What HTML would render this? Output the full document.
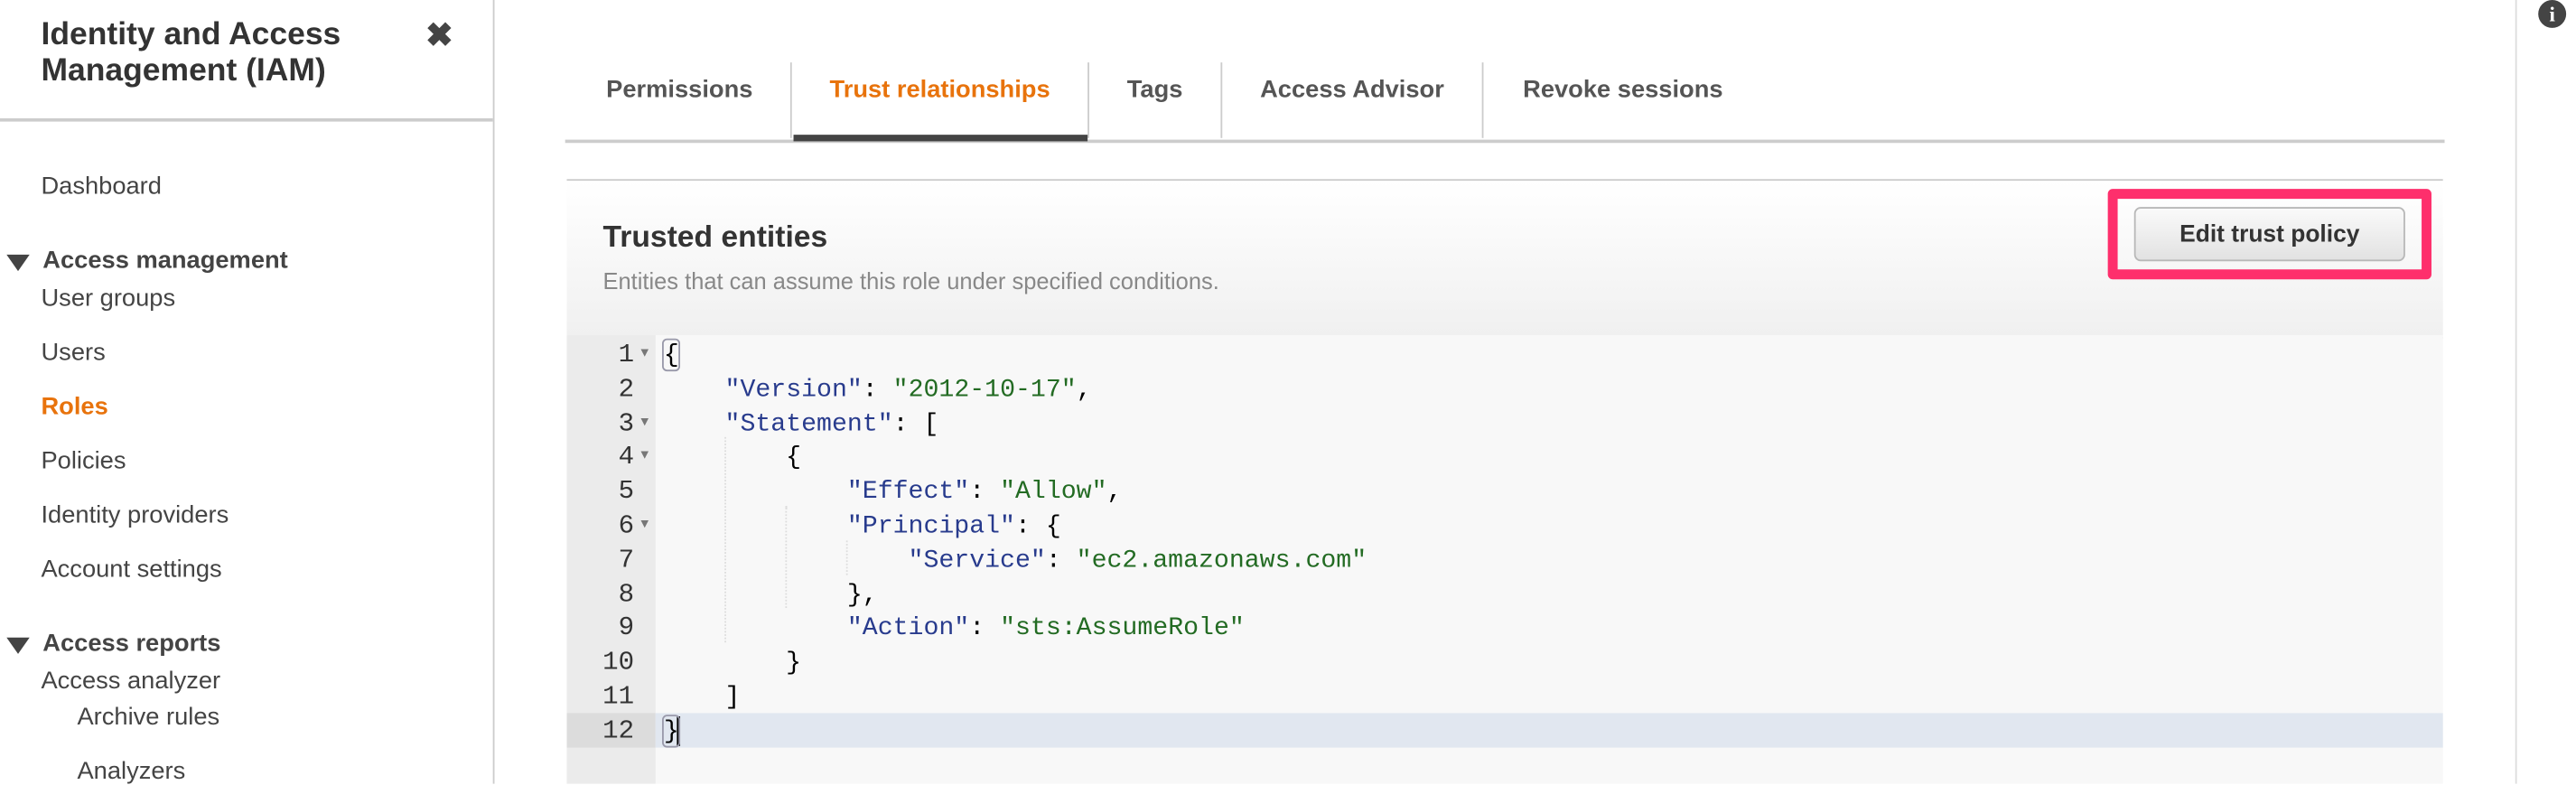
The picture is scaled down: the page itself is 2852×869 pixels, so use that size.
<!DOCTYPE html>
<html><head><meta charset="utf-8"><style>
html,body{margin:0;padding:0;background:#fff;overflow:hidden;width:2852px;height:868px}
#w{position:absolute;left:0;top:0;width:1568px;height:477px;transform:scale(1.8189);transform-origin:0 0;font-family:"Liberation Sans",Arial,sans-serif;color:#444}
.a{position:absolute;white-space:nowrap}
.nav{font-size:15px;color:#444}
.tab{font-size:15px;font-weight:bold;color:#555;top:46px}
.vd{position:absolute;width:1px;background:#ccc;top:38px;height:46px}
.tri{position:absolute;width:0;height:0;border-left:7px solid transparent;border-right:7px solid transparent;border-top:10px solid #444}
.code{position:absolute;left:345px;top:204px;width:1142px;height:273px;background:#f8f8f8;font-family:"Liberation Mono","DejaVu Sans Mono",monospace;font-size:15.5px}
.gut{position:absolute;left:0;top:0;width:54px;height:273px;background:#ebebeb}
.ln{position:absolute;left:0;width:41px;text-align:right;color:#333;font-size:16px}
.fd{position:absolute;left:45px;font-size:8px;color:#777}
.cl{position:absolute;left:59px;color:#000;white-space:pre}
.k{color:#283b8d}.s{color:#236b23}
.ig{position:absolute;border-left:1px dotted #ddd}
</style></head><body><div id="w">
<div class="a" style="left:25px;top:10px;font-size:19.5px;font-weight:bold;color:#333;line-height:22px">Identity and Access<br>Management (IAM)</div>
<div class="a" style="left:259px;top:9px;font-size:20px;font-weight:bold;color:#444">✖</div>
<div class="a" style="left:0;top:72px;width:300px;height:2px;background:#ccc"></div>
<div class="a" style="left:300px;top:0;width:1px;height:477px;background:#ccc"></div>
<div class="a nav" style="left:25px;top:105px">Dashboard</div>
<div class="tri" style="left:4px;top:155px"></div>
<div class="a nav" style="left:26px;top:150px;font-weight:bold">Access management</div>
<div class="a nav" style="left:25px;top:173px">User groups</div>
<div class="a nav" style="left:25px;top:206px">Users</div>
<div class="a nav" style="left:25px;top:239px;color:#e8730c;font-weight:bold">Roles</div>
<div class="a nav" style="left:25px;top:272px">Policies</div>
<div class="a nav" style="left:25px;top:305px">Identity providers</div>
<div class="a nav" style="left:25px;top:338px">Account settings</div>
<div class="tri" style="left:4px;top:388px"></div>
<div class="a nav" style="left:26px;top:383px;font-weight:bold">Access reports</div>
<div class="a nav" style="left:25px;top:406px">Access analyzer</div>
<div class="a nav" style="left:47px;top:428px">Archive rules</div>
<div class="a nav" style="left:47px;top:461px">Analyzers</div>
<div class="a tab" style="left:369px">Permissions</div>
<div class="vd" style="left:481px"></div>
<div class="a tab" style="left:505px;color:#e8730c">Trust relationships</div>
<div class="vd" style="left:662px"></div>
<div class="a tab" style="left:686px">Tags</div>
<div class="vd" style="left:743px"></div>
<div class="a tab" style="left:767px">Access Advisor</div>
<div class="vd" style="left:902px"></div>
<div class="a tab" style="left:927px">Revoke sessions</div>
<div class="a" style="left:344px;top:85px;width:1144px;height:2px;background:#ccc"></div>
<div class="a" style="left:483px;top:82px;width:179px;height:4px;background:#444"></div>
<div class="a" style="left:345px;top:109px;width:1142px;height:95px;background:linear-gradient(#fff,#f0f0f0);border-top:1px solid #ccc;border-bottom:1px solid #ccc"></div>
<div class="a" style="left:367px;top:133px;font-size:18.5px;font-weight:bold;color:#333">Trusted entities</div>
<div class="a" style="left:367px;top:163px;font-size:14px;color:#888">Entities that can assume this role under specified conditions.</div>
<div class="a" style="left:1283px;top:115px;width:185px;height:43px;border:6px solid #fe2f6c;border-radius:3px"></div>
<div class="a" style="left:1299px;top:126px;width:163px;height:31px;border:1px solid #b8b8b8;border-radius:4px;background:linear-gradient(#fafafa,#e2e2e2);font-size:14.5px;font-weight:bold;color:#333;text-align:center;line-height:33px">Edit trust policy</div>
<div class="code">
<div class="gut"></div>
<div class="a" style="left:0;top:230px;width:54px;height:21px;background:#dcdcdc"></div>
<div class="a" style="left:54px;top:230px;width:1088px;height:21px;background:#e1e7f0"></div>
<div class="ig" style="left:96px;top:62px;height:125px"></div>
<div class="ig" style="left:133px;top:104px;height:62px"></div>
<div class="ig" style="left:170px;top:125px;height:21px"></div>
<div style="position:absolute;left:0;top:2px;line-height:20.8px">
<div style="position:relative;height:20.8px"><span class="ln">1</span><span class="fd">▼</span><span class="cl"><span style="outline:1px solid #99a;border-radius:2px">{</span></span></div>
<div style="position:relative;height:20.8px"><span class="ln">2</span><span class="cl">    <span class="k">"Version"</span>: <span class="s">"2012-10-17"</span>,</span></div>
<div style="position:relative;height:20.8px"><span class="ln">3</span><span class="fd">▼</span><span class="cl">    <span class="k">"Statement"</span>: [</span></div>
<div style="position:relative;height:20.8px"><span class="ln">4</span><span class="fd">▼</span><span class="cl">        {</span></div>
<div style="position:relative;height:20.8px"><span class="ln">5</span><span class="cl">            <span class="k">"Effect"</span>: <span class="s">"Allow"</span>,</span></div>
<div style="position:relative;height:20.8px"><span class="ln">6</span><span class="fd">▼</span><span class="cl">            <span class="k">"Principal"</span>: {</span></div>
<div style="position:relative;height:20.8px"><span class="ln">7</span><span class="cl">                <span class="k">"Service"</span>: <span class="s">"ec2.amazonaws.com"</span></span></div>
<div style="position:relative;height:20.8px"><span class="ln">8</span><span class="cl">            },</span></div>
<div style="position:relative;height:20.8px"><span class="ln">9</span><span class="cl">            <span class="k">"Action"</span>: <span class="s">"sts:AssumeRole"</span></span></div>
<div style="position:relative;height:20.8px"><span class="ln">10</span><span class="cl">        }</span></div>
<div style="position:relative;height:20.8px"><span class="ln">11</span><span class="cl">    ]</span></div>
<div style="position:relative;height:20.8px"><span class="ln">12</span><span class="cl"><span style="outline:1px solid #99a;border-radius:2px">}</span><span style="border-left:2px solid #000;margin-left:-1px"></span></span></div>
</div>
</div>
<div class="a" style="left:1531px;top:0;width:1px;height:477px;background:#ddd"></div>
<div class="a" style="left:1545px;top:0;width:17px;height:17px;border-radius:50%;background:#444;color:#fff;font-size:13px;font-weight:bold;text-align:center;line-height:17px;font-family:'Liberation Serif',serif">i</div>
</div></body></html>
